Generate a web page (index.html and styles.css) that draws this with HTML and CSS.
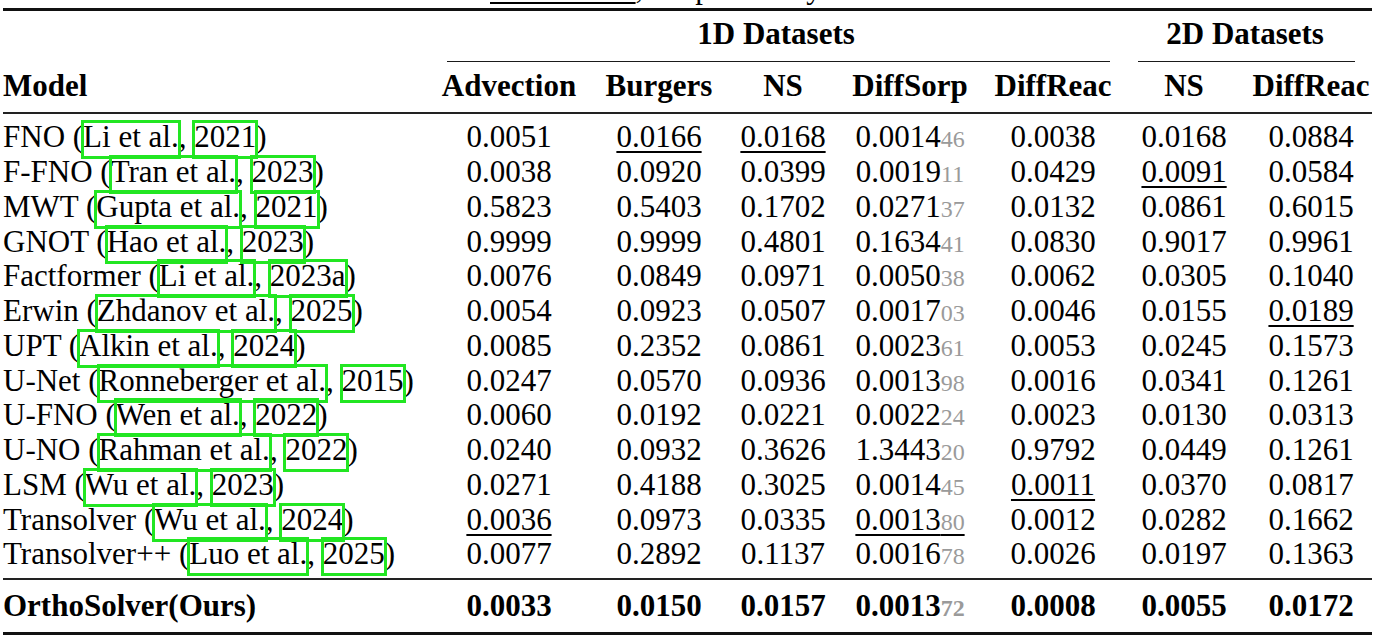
FILE: index.html
```html
<!DOCTYPE html>
<html lang="en">
<head>
<meta charset="utf-8">
<title>Results table</title>
<link rel="stylesheet" href="styles.css">
</head>
<body>
<div class="caption-clip">
  <p class="caption-line"><span class="cap-u">underlined</span><span class="cap-rest">, respectively.</span></p>
</div>
<table class="results">
  <colgroup>
    <col class="c-model">
    <col class="c-adv">
    <col class="c-burg">
    <col class="c-ns">
    <col class="c-sorp">
    <col class="c-reac">
    <col class="c-ns2">
    <col class="c-reac2">
  </colgroup>
  <thead>
    <tr class="group-row">
      <th></th>
      <th colspan="5" class="group g1d"><div class="group-label">1D Datasets</div><div class="cmid"></div></th>
      <th colspan="2" class="group g2d"><div class="group-label">2D Datasets</div><div class="cmid"></div></th>
    </tr>
    <tr class="head-row">
      <th class="model">Model</th>
      <th>Advection</th>
      <th>Burgers</th>
      <th>NS</th>
      <th>DiffSorp</th>
      <th>DiffReac</th>
      <th>NS</th>
      <th>DiffReac</th>
    </tr>
  </thead>
  <tbody class="baselines">
    <tr class="first">
      <td class="model">FNO (<span class="cite">Li et al.</span>, <span class="cite">2021</span>)</td>
      <td>0.0051</td><td><span class="u">0.0166</span></td><td><span class="u">0.0168</span></td><td>0.0014<span class="tail">46</span></td><td>0.0038</td><td>0.0168</td><td>0.0884</td>
    </tr>
    <tr>
      <td class="model">F-FNO (<span class="cite">Tran et al.</span>, <span class="cite">2023</span>)</td>
      <td>0.0038</td><td>0.0920</td><td>0.0399</td><td>0.0019<span class="tail">11</span></td><td>0.0429</td><td><span class="u">0.0091</span></td><td>0.0584</td>
    </tr>
    <tr>
      <td class="model">MWT (<span class="cite">Gupta et al.</span>, <span class="cite">2021</span>)</td>
      <td>0.5823</td><td>0.5403</td><td>0.1702</td><td>0.0271<span class="tail">37</span></td><td>0.0132</td><td>0.0861</td><td>0.6015</td>
    </tr>
    <tr>
      <td class="model">GNOT (<span class="cite">Hao et al.</span>, <span class="cite">2023</span>)</td>
      <td>0.9999</td><td>0.9999</td><td>0.4801</td><td>0.1634<span class="tail">41</span></td><td>0.0830</td><td>0.9017</td><td>0.9961</td>
    </tr>
    <tr>
      <td class="model">Factformer (<span class="cite">Li et al.</span>, <span class="cite">2023a</span>)</td>
      <td>0.0076</td><td>0.0849</td><td>0.0971</td><td>0.0050<span class="tail">38</span></td><td>0.0062</td><td>0.0305</td><td>0.1040</td>
    </tr>
    <tr>
      <td class="model">Erwin (<span class="cite">Zhdanov et al.</span>, <span class="cite">2025</span>)</td>
      <td>0.0054</td><td>0.0923</td><td>0.0507</td><td>0.0017<span class="tail">03</span></td><td>0.0046</td><td>0.0155</td><td><span class="u">0.0189</span></td>
    </tr>
    <tr>
      <td class="model">UPT (<span class="cite">Alkin et al.</span>, <span class="cite">2024</span>)</td>
      <td>0.0085</td><td>0.2352</td><td>0.0861</td><td>0.0023<span class="tail">61</span></td><td>0.0053</td><td>0.0245</td><td>0.1573</td>
    </tr>
    <tr>
      <td class="model">U-Net (<span class="cite">Ronneberger et al.</span>, <span class="cite">2015</span>)</td>
      <td>0.0247</td><td>0.0570</td><td>0.0936</td><td>0.0013<span class="tail">98</span></td><td>0.0016</td><td>0.0341</td><td>0.1261</td>
    </tr>
    <tr>
      <td class="model">U-FNO (<span class="cite">Wen et al.</span>, <span class="cite">2022</span>)</td>
      <td>0.0060</td><td>0.0192</td><td>0.0221</td><td>0.0022<span class="tail">24</span></td><td>0.0023</td><td>0.0130</td><td>0.0313</td>
    </tr>
    <tr>
      <td class="model">U-NO (<span class="cite">Rahman et al.</span>, <span class="cite">2022</span>)</td>
      <td>0.0240</td><td>0.0932</td><td>0.3626</td><td>1.3443<span class="tail">20</span></td><td>0.9792</td><td>0.0449</td><td>0.1261</td>
    </tr>
    <tr>
      <td class="model">LSM (<span class="cite">Wu et al.</span>, <span class="cite">2023</span>)</td>
      <td>0.0271</td><td>0.4188</td><td>0.3025</td><td>0.0014<span class="tail">45</span></td><td><span class="u">0.0011</span></td><td>0.0370</td><td>0.0817</td>
    </tr>
    <tr>
      <td class="model">Transolver (<span class="cite">Wu et al.</span>, <span class="cite">2024</span>)</td>
      <td><span class="u">0.0036</span></td><td>0.0973</td><td>0.0335</td><td><span class="u">0.0013<span class="tail">80</span></span></td><td>0.0012</td><td>0.0282</td><td>0.1662</td>
    </tr>
    <tr class="last">
      <td class="model">Transolver++ (<span class="cite">Luo et al.</span>, <span class="cite">2025</span>)</td>
      <td>0.0077</td><td>0.2892</td><td>0.1137</td><td>0.0016<span class="tail">78</span></td><td>0.0026</td><td>0.0197</td><td>0.1363</td>
    </tr>
  </tbody>
  <tbody class="ours">
    <tr>
      <td class="model">OrthoSolver(Ours)</td>
      <td>0.0033</td><td>0.0150</td><td>0.0157</td><td>0.0013<span class="tail">72</span></td><td>0.0008</td><td>0.0055</td><td>0.0172</td>
    </tr>
  </tbody>
</table>
</body>
</html>
```

FILE: styles.css
```css
html, body {
  margin: 0;
  padding: 0;
  background: #ffffff;
}

body {
  color: #000000;
  font-family: "Liberation Serif", "Times New Roman", serif;
  font-size: 31px;
}

/* clipped tail of the caption above the table */
.caption-clip {
  height: 8px;
  overflow: hidden;
}

.caption-line {
  margin: -29px 0 0 0;
  padding-left: 490px;
  line-height: 34px;
  white-space: nowrap;
}

.cap-u {
  text-decoration: underline;
  text-decoration-thickness: 1.5px;
  text-underline-offset: 4px;
  letter-spacing: 1.3px;
}

.cap-rest {
  letter-spacing: 1.6px;
}

/* table */
.results {
  margin: 0 0 0 3px;
  width: 1369px;
  table-layout: fixed;
  border-collapse: separate;
  border-spacing: 0;
  border-top: 3px solid #111111;
  border-bottom: 3px solid #111111;
  line-height: 34.75px;
}

.c-model { width: 431px; }
.c-adv   { width: 150px; }
.c-burg  { width: 150px; }
.c-ns    { width: 98px; }
.c-sorp  { width: 156px; }
.c-reac  { width: 130px; }
.c-ns2   { width: 132px; }
.c-reac2 { width: 122px; }

.results th,
.results td {
  padding: 0;
  text-align: center;
  white-space: nowrap;
  vertical-align: top;
}

.results th {
  font-weight: bold;
}

.results .model {
  text-align: left;
}

/* group header row */
.group-row th {
  padding-top: 6.2px;
}

.cmid {
  margin-top: 9.5px;
  border-top: 1px solid #1a1a1a;
}

.g1d .cmid {
  margin-left: 13px;
  margin-right: 8px;
}

.g2d {
  padding-left: 8px;
}

.g2d .cmid {
  margin-left: 20px;
  margin-right: 17px;
}

/* column header row */
.head-row th {
  padding-top: 6.2px;
  padding-bottom: 8.85px;
  border-bottom: 2px solid #222222;
}

/* body */
.baselines .first td {
  padding-top: 6.2px;
}

.baselines .last td {
  padding-bottom: 6.2px;
  border-bottom: 2px solid #222222;
}

.ours td {
  font-weight: bold;
  padding-top: 8.2px;
  padding-bottom: 8.5px;
}

.tail {
  font-size: 24px;
  line-height: 0;
  color: #9a9a9a;
}

.u {
  text-decoration: underline;
  text-decoration-thickness: 1.5px;
  text-underline-offset: 4px;
  text-decoration-color: #000000;
}

/* hyperref-style citation link boxes */
.cite {
  position: relative;
}

.cite::after {
  content: "";
  position: absolute;
  left: -2px;
  right: -2px;
  top: 1px;
  bottom: -5px;
  border: 3px solid #22e622;
  pointer-events: none;
}
```
